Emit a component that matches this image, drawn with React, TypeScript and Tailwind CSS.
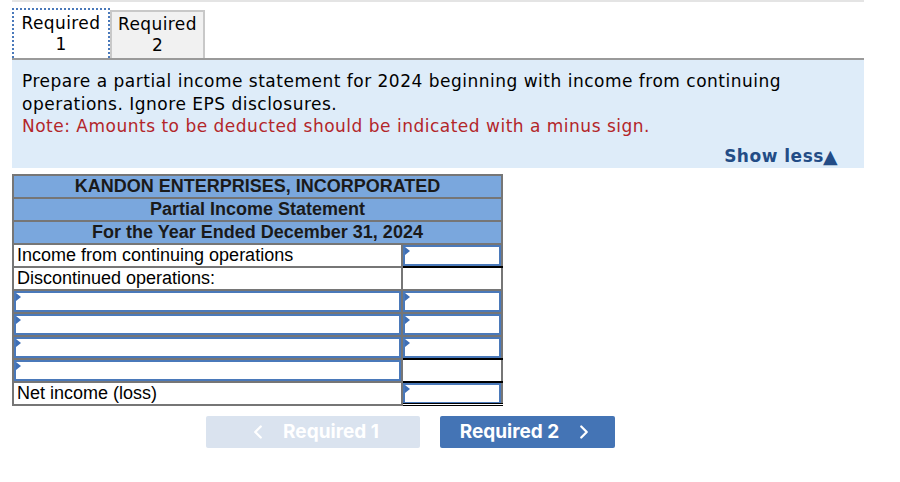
import { ChevronLeft, ChevronRight } from 'lucide-react'

const verdana = { fontFamily: '"DejaVu Sans", Verdana, sans-serif' }

function Marker() {
  return <span className="absolute left-0 top-0 w-0 h-0 border-t-[4px] border-b-[4px] border-l-[5px] border-t-transparent border-b-transparent border-l-[#3f6fb5]" />
}

function InputBox({ marker = true }: { marker?: boolean }) {
  return (
    <div className="relative h-full border-2 border-[#4a79ba] bg-white">
      {marker && <Marker />}
    </div>
  )
}

export default function App() {
  const rows = [
    { label: 'Income from continuing operations', value: 'input' },
    { label: 'Discontinued operations:', value: 'blank' },
    { label: null, value: 'input' },
    { label: null, value: 'input' },
    { label: null, value: 'input' },
    { label: null, value: 'total' },
    { label: 'Net income (loss)', value: 'input-double' }
  ]

  return (
    <div className="w-[900px] h-[482px] bg-white relative overflow-hidden" style={{ fontFamily: '"Liberation Sans", Arial, sans-serif' }}>
      <div className="ml-[12px] w-[852px]">
        <div className="h-[2px] bg-[#e4e4e4]" />

        {/* tabs */}
        <div className="flex items-end mt-[6px] border-b-2 border-[#9a9a9a] text-[17px] tracking-[0.4px] leading-[21px] text-black" style={verdana}>
          <div className="w-[98px] h-[50px] bg-white border-2 border-b-0 border-dotted border-[#4a79ba] flex flex-col items-center justify-center">
            <span>Required</span>
            <span>1</span>
          </div>
          <div className="w-[95px] h-[48px] bg-[#f1f1f1] border-2 border-b-0 border-[#c8c8c8] flex flex-col items-center justify-center">
            <span>Required</span>
            <span>2</span>
          </div>
        </div>

        {/* instructions */}
        <div className="bg-[#deecf9] h-[108px] px-[10px] pt-[10px] relative text-[17px] tracking-[0.5px] leading-[22.5px]" style={verdana}>
          <p className="text-black">Prepare a partial income statement for 2024 beginning with income from continuing operations. Ignore EPS disclosures.</p>
          <p className="text-[#b3262a]">Note: Amounts to be deducted should be indicated with a minus sign.</p>
          <div className="absolute right-[26px] bottom-[1px] flex items-center font-bold text-[#234c86]">
            Show less<span className="text-[19px] leading-[20px] -ml-[1px]">▲</span>
          </div>
        </div>
      </div>

      {/* table */}
      <div className="ml-[12px] mt-[6px] w-[491px] border-2 border-[#767676] bg-[#767676] text-[18px]">
        {['KANDON ENTERPRISES, INCORPORATED', 'Partial Income Statement', 'For the Year Ended December 31, 2024'].map((t, i) => (
          <div key={t} className={`h-[21px] bg-[#7aa7dd] flex items-center justify-center font-bold text-[#1a1a1a] ${i > 0 ? 'mt-[2px]' : ''}`}>
            {t}
          </div>
        ))}
        {rows.map((r, i) => (
          <div key={i} className="flex h-[21px] mt-[2px] gap-[2px]">
            <div className="w-[387px] bg-white h-full">
              {r.label ? (
                <div className="pl-[3px] leading-[21px] text-black">{r.label}</div>
              ) : (
                <InputBox />
              )}
            </div>
            <div className="flex-1 bg-white h-full relative">
              {r.value === 'blank' && <div className="absolute -top-[2px] left-0 -right-[2px] h-[2px] bg-black" />}
              {r.value === 'input' && <InputBox />}
              {r.value === 'total' && (
                <>
                  <div className="absolute -top-[2px] left-0 -right-[2px] h-[2px] bg-black" />
                  <div className="absolute -bottom-[2px] left-0 -right-[2px] h-[2px] bg-black" />
                </>
              )}
              {r.value === 'input-double' && (
                <>
                  <InputBox />
                  <div className="absolute -bottom-[2px] left-0 -right-[2px] h-[3px] border-t border-b border-black bg-white" />
                </>
              )}
            </div>
          </div>
        ))}
      </div>

      {/* buttons */}
      <div className="flex mt-[10px] ml-[206px] gap-[20px] text-[19px] font-bold text-white" style={{ fontFamily: 'Inter, "Open Sans", sans-serif' }}>
        <div className="w-[214px] h-[32px] rounded-[2px] bg-[#dae3ef] flex items-center justify-center gap-[14px]">
          <ChevronLeft size={22} strokeWidth={2.5} />
          <span>Required 1</span>
        </div>
        <div className="w-[175px] h-[32px] rounded-[2px] bg-[#4474b5] flex items-center justify-center gap-[14px]">
          <span>Required 2</span>
          <ChevronRight size={22} strokeWidth={2.5} />
        </div>
      </div>
    </div>
  )
}
